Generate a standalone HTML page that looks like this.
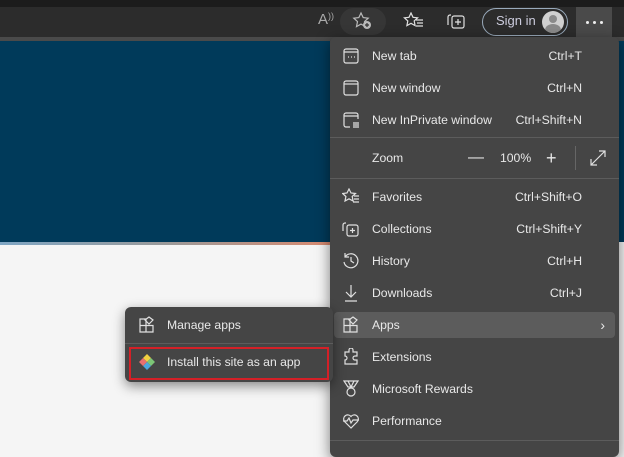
<!DOCTYPE html>
<html><head><style>
*{margin:0;padding:0;box-sizing:border-box}
body{width:624px;height:445px;overflow:hidden;position:relative;background:#f5f5f5;font-family:"Segoe UI","Liberation Sans",sans-serif;font-size:12.2px;color:#e8e8e8}
.abs{position:absolute}
.menu{left:330px;top:37px;width:289px;height:420px;background:#454545;border-radius:6px;box-shadow:0 4px 14px rgba(0,0,0,.5)}
.row{position:absolute;left:0;width:289px;height:32px;line-height:32px}
.row .lb{position:absolute;left:42px}
.row .sc{position:absolute;right:37px}
.row svg{position:absolute;left:12px;top:7px}
.sep{position:absolute;left:0;width:289px;height:1px;background:#5c5c5c}
svg{fill:none;stroke:#e0e0e0;stroke-width:1.2}
</style></head><body>
<div class="abs" style="left:0;top:0;width:624px;height:7px;background:#1c1c1c"></div>
<div class="abs" style="left:0;top:7px;width:624px;height:30px;background:#2c2c2c"></div>
<div class="abs" style="left:0;top:37px;width:624px;height:4px;background:#4a4a4a"></div>
<div class="abs" style="left:0;top:41px;width:624px;height:201px;background:#003a5a"></div>
<div class="abs" style="left:0;top:242px;width:330px;height:3px;background:linear-gradient(90deg,#7fa6c4,#9a9a9a,#d88a70)"></div>
<div class="abs" style="left:330px;top:41px;width:2px;height:400px;background:#4a4a4a"></div>

<!-- toolbar -->
<div class="abs" style="left:318px;top:11px;color:#aaa;font-size:15px">A<span style="font-size:9px;vertical-align:top">))</span></div>
<div class="abs" style="left:340px;top:8px;width:46px;height:27px;border-radius:14px;background:#363636"></div>
<svg class="abs" style="left:352px;top:11px" width="22" height="20" viewBox="0 0 22 20"><path d="M9 2l2.2 4.6 5 .6-3.7 3.4 1 5-4.5-2.5-4.5 2.5 1-5L1.8 7.2l5-.6z" stroke="#bbb"/><circle cx="15" cy="14" r="4" fill="#bbb" stroke="none"/><path d="M15 12v4M13 14h4" stroke="#333"/></svg>
<svg class="abs" style="left:403px;top:12px" width="22" height="18" viewBox="0 0 22 18"><path d="M8 1l2 4.3 4.6.5-3.4 3.2.9 4.6L8 11.3 3.9 13.6l.9-4.6L1.4 5.8 6 5.3z"/><path d="M13 8h7M14 11h6M13 14h7"/></svg>
<svg class="abs" style="left:447px;top:11px" width="20" height="20" viewBox="0 0 20 20"><path d="M4 4h-1a2 2 0 0 0-2 2v8"/><rect x="5" y="5" width="12" height="12" rx="2"/><path d="M11 8v6M8 11h6"/></svg>
<div class="abs" style="left:482px;top:8px;width:86px;height:28px;border:1px solid #9ab;border-radius:14px"></div>
<div class="abs" style="left:496px;top:13px;font-size:13px;color:#ccd">Sign in</div>
<div class="abs" style="left:542px;top:11px;width:22px;height:22px;border-radius:50%;background:#d0d0d0;overflow:hidden"><div class="abs" style="left:7px;top:4px;width:8px;height:8px;border-radius:50%;background:#8a8a8a"></div><div class="abs" style="left:3px;top:13px;width:16px;height:12px;border-radius:50%;background:#8a8a8a"></div></div>
<div class="abs" style="left:576px;top:7px;width:36px;height:30px;background:#4a4a4a"></div>
<div class="abs" style="left:586px;top:21px;width:3px;height:3px;border-radius:50%;background:#eee"></div>
<div class="abs" style="left:593px;top:21px;width:3px;height:3px;border-radius:50%;background:#eee"></div>
<div class="abs" style="left:600px;top:21px;width:3px;height:3px;border-radius:50%;background:#eee"></div>

<div class="abs menu">
 <div class="row" style="top:3px"><svg width="18" height="18" viewBox="0 0 18 18"><rect x="2" y="2" width="14" height="14" rx="2"/><path d="M2 5h14M6 10h1M9 10h1M12 10h1"/></svg><span class="lb">New tab</span><span class="sc">Ctrl+T</span></div>
 <div class="row" style="top:35px"><svg width="18" height="18" viewBox="0 0 18 18"><rect x="2" y="2" width="14" height="14" rx="2"/><path d="M2 5h14"/></svg><span class="lb">New window</span><span class="sc">Ctrl+N</span></div>
 <div class="row" style="top:67px"><svg width="18" height="18" viewBox="0 0 18 18"><path d="M16 8V4a2 2 0 0 0-2-2H4a2 2 0 0 0-2 2v10a2 2 0 0 0 2 2h4M2 5h14"/><path d="M11 12h6M11 14h6M11 16h6"/></svg><span class="lb">New InPrivate window</span><span class="sc">Ctrl+Shift+N</span></div>
 <div class="sep" style="top:100px"></div>
 <div class="row" style="top:105px"><span class="lb">Zoom</span><span style="position:absolute;left:138px;font-size:16px">—</span><span style="position:absolute;left:170px">100%</span><span style="position:absolute;left:216px;font-size:18px">+</span><div style="position:absolute;left:245px;top:4px;width:1px;height:24px;background:#666"></div><svg style="left:259px" width="18" height="18" viewBox="0 0 18 18"><path d="M2 16L16 2M10 2h6v6M2 10v6h6"/></svg></div>
 <div class="sep" style="top:141px"></div>
 <div class="row" style="top:144px"><svg width="18" height="18" viewBox="0 0 18 18"><path d="M7 1l2 4 4.5.5-3.3 3 .9 4.5L7 10.8 3 13l.9-4.5L.6 5.5 5 5z"/><path d="M12 8h5M12 11h5M11 14h6"/></svg><span class="lb">Favorites</span><span class="sc">Ctrl+Shift+O</span></div>
 <div class="row" style="top:176px"><svg width="18" height="18" viewBox="0 0 18 18"><path d="M4 3h-1a2 2 0 0 0-2 2v6"/><rect x="5" y="5" width="11" height="11" rx="2"/><path d="M10.5 8v5M8 10.5h5"/></svg><span class="lb">Collections</span><span class="sc">Ctrl+Shift+Y</span></div>
 <div class="row" style="top:208px"><svg width="18" height="18" viewBox="0 0 18 18"><path d="M3 5a7 7 0 1 1-1 5M3 1v4h4M9 5v4l3 2"/></svg><span class="lb">History</span><span class="sc">Ctrl+H</span></div>
 <div class="row" style="top:240px"><svg width="18" height="18" viewBox="0 0 18 18"><path d="M9 1v12M4 8l5 5 5-5M3 17h12"/></svg><span class="lb">Downloads</span><span class="sc">Ctrl+J</span></div>
 <div class="row" style="top:275px;left:4px;width:281px;height:26px;background:#5c5c5c;border-radius:4px"></div>
 <div class="row" style="top:272px"><svg width="18" height="18" viewBox="0 0 18 18"><path d="M2 3h6v13H2zM2 9.5h13V16H8M11 1l4 3-4 4-4-4z"/></svg><span class="lb">Apps</span><span style="position:absolute;right:14px;font-size:14px">›</span></div>
 <div class="row" style="top:304px"><svg width="18" height="18" viewBox="0 0 18 18"><path d="M7 2a2 2 0 0 1 4 0v2h4v4h-2a2 2 0 0 0 0 4h2v4H3v-4a2 2 0 0 0 0-4V4h4z"/></svg><span class="lb">Extensions</span></div>
 <div class="row" style="top:336px"><svg width="18" height="18" viewBox="0 0 18 18"><path d="M2 1h14l-4 6H6zM6 1l3 6 3-6"/><circle cx="9" cy="12" r="4"/></svg><span class="lb">Microsoft Rewards</span></div>
 <div class="row" style="top:368px"><svg width="18" height="18" viewBox="0 0 18 18"><path d="M9 16L2.5 9.5a4 4 0 0 1 6.5-5 4 4 0 0 1 6.5 5z"/><path d="M1 9h4l2-3 2 5 2-3h6"/></svg><span class="lb">Performance</span></div>
 <div class="sep" style="top:403px"></div>
</div>

<!-- submenu -->
<div class="abs" style="left:125px;top:307px;width:208px;height:75px;background:#454545;border-radius:6px;box-shadow:0 4px 12px rgba(0,0,0,.45)">
 <svg class="abs" style="left:13px;top:9px" width="18" height="18" viewBox="0 0 18 18"><path d="M2 3h6v13H2zM2 9.5h13V16H8M11 1l4 3-4 4-4-4z"/></svg>
 <div class="abs" style="left:42px;top:11px">Manage apps</div>
 <div class="abs" style="left:0;top:36px;width:208px;height:1px;background:#5c5c5c"></div>
 <div class="abs" style="left:4px;top:40px;width:200px;height:33px;border:2.5px solid #d42027"></div>
 <svg class="abs" style="left:13px;top:46px" width="18" height="18" viewBox="0 0 18 18"><path d="M9 1l4 4-4 4-4-4z" fill="#f0d040" stroke="none"/><path d="M13 5l4 4-4 4-4-4z" fill="#7cc576" stroke="none"/><path d="M9 9l4 4-4 4-4-4z" fill="#4aa8e0" stroke="none"/><path d="M5 5l4 4-4 4-4-4z" fill="#e87070" stroke="none"/></svg>
 <div class="abs" style="left:42px;top:48px">Install this site as an app</div>
</div>
</body></html>
